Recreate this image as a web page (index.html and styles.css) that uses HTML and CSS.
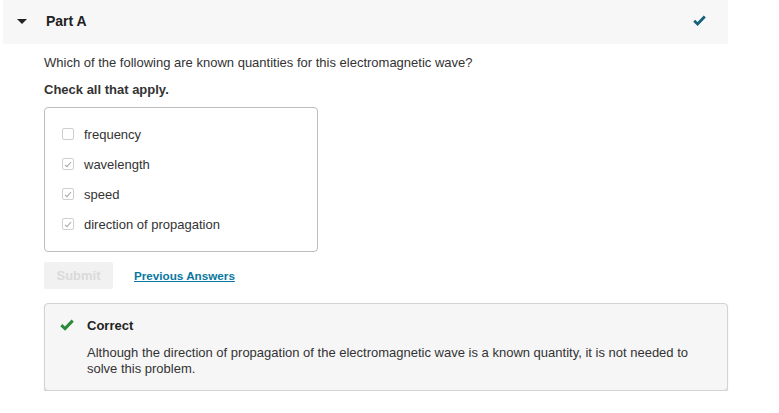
FILE: index.html
```html
<!DOCTYPE html>
<html>
<head>
<meta charset="utf-8">
<link rel="stylesheet" href="styles.css">
</head>
<body>
<div class="page">
  <div class="part-header">
    <span class="caret"></span>
    <span class="part-title">Part A</span>
    <svg class="done-check" width="13" height="11" viewBox="0 0 13 11"><path d="M1.2 5.8 L4.6 9 L11.8 1.6" fill="none" stroke="#17607a" stroke-width="2.8" stroke-linejoin="miter"/></svg>
  </div>
  <div class="part-body">
    <p class="question">Which of the following are known quantities for this electromagnetic wave?</p>
    <p class="instruction">Check all that apply.</p>
    <div class="choices">
      <div class="choice"><span class="cb"></span><span class="label">frequency</span></div>
      <div class="choice"><span class="cb checked"><svg width="8" height="7" viewBox="0 0 8 7"><path d="M1 3.8 L3 5.6 L7 1" fill="none" stroke="#a9a9a9" stroke-width="1.1"/></svg></span><span class="label">wavelength</span></div>
      <div class="choice"><span class="cb checked"><svg width="8" height="7" viewBox="0 0 8 7"><path d="M1 3.8 L3 5.6 L7 1" fill="none" stroke="#a9a9a9" stroke-width="1.1"/></svg></span><span class="label">speed</span></div>
      <div class="choice"><span class="cb checked"><svg width="8" height="7" viewBox="0 0 8 7"><path d="M1 3.8 L3 5.6 L7 1" fill="none" stroke="#a9a9a9" stroke-width="1.1"/></svg></span><span class="label">direction of propagation</span></div>
    </div>
    <div class="actions">
      <button class="submit" disabled>Submit</button>
      <a class="prev" href="#">Previous Answers</a>
    </div>
    <div class="feedback">
      <div class="fb-head">
        <svg class="fb-check" width="14" height="12" viewBox="0 0 14 12"><path d="M1.3 6.2 L5 9.6 L12.7 1.6" fill="none" stroke="#2a8a3a" stroke-width="3"/></svg>
        <span class="fb-title">Correct</span>
      </div>
      <p class="fb-text">Although the direction of propagation of the electromagnetic wave is a known quantity, it is not needed to solve this problem.</p>
    </div>
  </div>
</div>
</body>
</html>
```

FILE: styles.css
```css
html, body {
  margin: 0;
  padding: 0;
  background: #fff;
}
body {
  font-family: "Liberation Sans", Arial, Helvetica, sans-serif;
  color: #333;
}
.page {
  width: 779px;
}
.part-header {
  margin-left: 3px;
  width: 725px;
  height: 44px;
  background: #f7f7f7;
  display: flex;
  align-items: center;
  box-sizing: border-box;
  padding-left: 14px;
  padding-right: 22px;
}
.caret {
  width: 0;
  height: 0;
  border-left: 5px solid transparent;
  border-right: 5px solid transparent;
  border-top: 5px solid #222;
  margin-top: -2px;
}
.part-title {
  font-weight: bold;
  font-size: 14px;
  color: #222;
  margin-left: 19px;
  margin-top: -2px;
}
.done-check {
  margin-left: auto;
  margin-top: -3px;
}
.part-body {
  padding-left: 44px;
}
.question {
  margin: 0;
  padding-top: 11px;
  font-size: 13px;
  line-height: 16px;
  color: #333;
}
.instruction {
  margin: 0;
  padding-top: 11px;
  font-size: 13px;
  line-height: 16px;
  font-weight: bold;
  color: #333;
}
.choices {
  margin-top: 9px;
  width: 274px;
  height: 145px;
  box-sizing: border-box;
  border: 1px solid #bdbdbd;
  border-radius: 4px;
  padding-top: 18px;
  padding-left: 17px;
  display: flex;
  flex-direction: column;
  gap: 14px;
}
.choice {
  display: flex;
  align-items: center;
  height: 16px;
}
.cb {
  width: 10px;
  height: 10px;
  border: 1px solid #cfcfcf;
  border-radius: 2px;
  background: #fff;
  display: flex;
  align-items: center;
  justify-content: center;
}
.label {
  margin-left: 10px;
  font-size: 13px;
  color: #333;
}
.actions {
  margin-top: 10px;
  display: flex;
  align-items: center;
}
.submit {
  width: 69px;
  height: 27px;
  border: none;
  border-radius: 2px;
  background: #f1f1f1;
  color: #dadada;
  font-family: "Liberation Sans", Arial, sans-serif;
  font-size: 13px;
  font-weight: bold;
  padding: 0;
}
.prev {
  margin-left: 21px;
  font-size: 11.7px;
  font-weight: bold;
  color: #0a77a0;
  text-decoration: underline;
}
.feedback {
  margin-top: 14px;
  width: 684px;
  box-sizing: border-box;
  height: 88px;
  background: #f6f6f6;
  border: 1px solid #d3d3d3;
  border-radius: 4px;
  box-shadow: 0 1px 1px #c8c8c8;
  padding: 13px 20px 0 15px;
}
.fb-head {
  display: flex;
  align-items: center;
  height: 16px;
}
.fb-title {
  margin-left: 13px;
  font-size: 13px;
  font-weight: bold;
  color: #222;
}
.fb-text {
  margin: 12px 0 0 27px;
  font-size: 13px;
  line-height: 16px;
  color: #333;
}
```
